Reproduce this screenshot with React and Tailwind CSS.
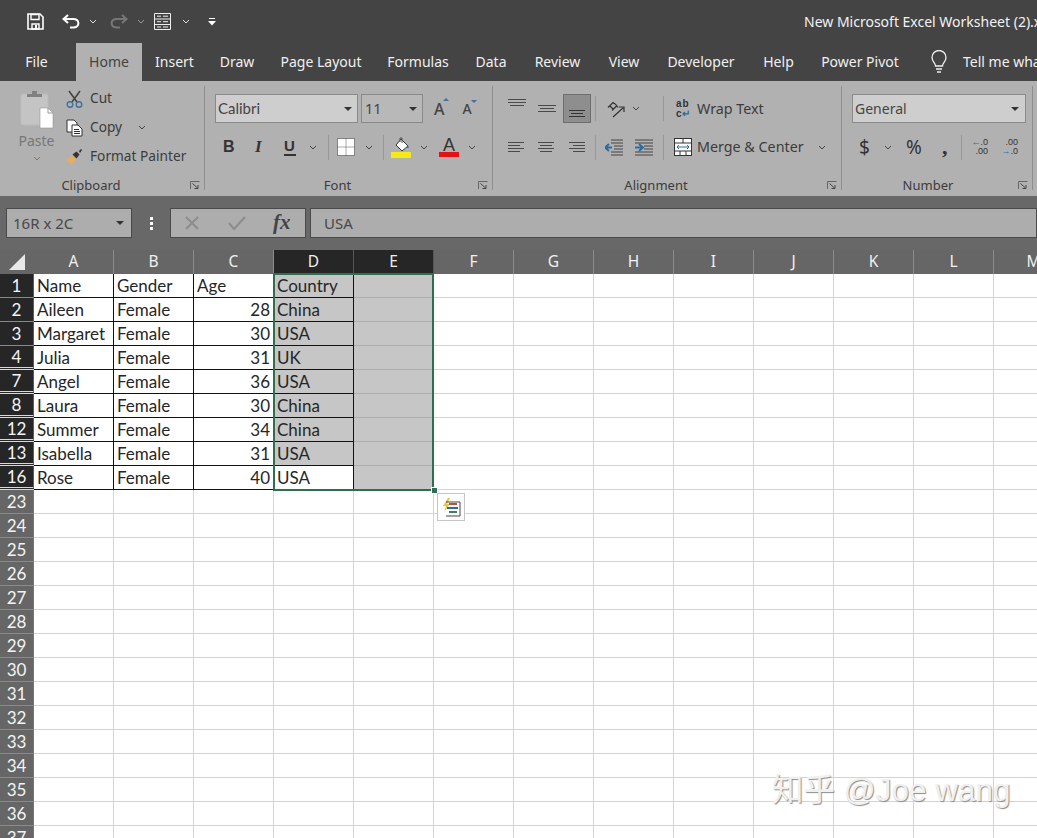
import React from 'react';

const tabs = [
  { label: 'File', width: 'w-[73px]' },
  { label: 'Home', width: 'w-[66px] ml-[3px] bg-[#b1b1b1] !text-[#444]' },
  { label: 'Insert', width: 'w-[65px]' },
  { label: 'Draw', width: 'w-[60px]' },
  { label: 'Page Layout', width: 'w-[108px]' },
  { label: 'Formulas', width: 'w-[86px]' },
  { label: 'Data', width: 'w-[60px]' },
  { label: 'Review', width: 'w-[73px]' },
  { label: 'View', width: 'w-[60px]' },
  { label: 'Developer', width: 'w-[94px]' },
  { label: 'Help', width: 'w-[61px]' },
  { label: 'Power Pivot', width: 'w-[102px]' },
];

const columns = ['A', 'B', 'C', 'D', 'E', 'F', 'G', 'H', 'I', 'J', 'K', 'L', 'M'];

const tableRows = [
  { n: 1, cells: ['Name', 'Gender', 'Age', 'Country'] },
  { n: 2, cells: ['Aileen', 'Female', '28', 'China'] },
  { n: 3, cells: ['Margaret', 'Female', '30', 'USA'] },
  { n: 4, cells: ['Julia', 'Female', '31', 'UK'], hidden: true },
  { n: 7, cells: ['Angel', 'Female', '36', 'USA'], hidden: true },
  { n: 8, cells: ['Laura', 'Female', '30', 'China'], hidden: true },
  { n: 12, cells: ['Summer', 'Female', '34', 'China'], hidden: true },
  { n: 13, cells: ['Isabella', 'Female', '31', 'USA'], hidden: true },
  { n: 16, cells: ['Rose', 'Female', '40', 'USA'], hidden: true },
];

const emptyRows = [23, 24, 25, 26, 27, 28, 29, 30, 31, 32, 33, 34, 35, 36, 37];

// Small ribbon chevron
const Chev = ({ className = '', color = '#444' }) => (
  <svg width="8" height="5" viewBox="0 0 8 5" className={`shrink-0 ${className}`}>
    <path d="M1 1l3 3 3-3" fill="none" stroke={color} strokeWidth="1" />
  </svg>
);

const Caret = ({ className = '', color = '#333' }) => (
  <svg width="8" height="4" viewBox="0 0 8 4" className={`shrink-0 ${className}`}>
    <path d="M0 0h8L4 4z" fill={color} />
  </svg>
);

const Launcher = ({ className = '' }) => (
  <svg width="10" height="9" viewBox="0 0 10 9" className={className}>
    <path d="M.5 8V.5H9.5" fill="none" stroke="#666" />
    <path d="M2.5 2.5l5 4.5M8 4v3.5H4.5" fill="none" stroke="#444" />
  </svg>
);

// lines for the alignment icons, [x, y, length] per line
const Lines = ({ rows, w = 18, h = 14, color = '#4a4a4a' }) => (
  <svg width={w} height={h} viewBox={`0 0 ${w} ${h}`} className="shrink-0">
    {rows.map(([x, y, len], i) => (
      <rect key={i} x={x} y={y} width={len} height="1" fill={color} />
    ))}
  </svg>
);

const Sep = ({ className = '' }) => <div className={`w-px bg-[#979797] shrink-0 ${className}`} />;

const Group = ({ label, width, labelPad, children }) => (
  <div className={`relative mt-[5px] h-[104px] shrink-0 border-r border-[#8f8f8f] ${width}`}>
    <div className="h-[86px]">{children}</div>
    <div className={`relative flex h-[27px] items-center justify-center text-[13px] text-[#3c3c3c] ${labelPad}`}>
      {label}
      <Launcher className="absolute right-[4px] top-[9px]" />
    </div>
  </div>
);

const QuickToolbar = () => (
  <div className="flex h-[43px] items-center">
    <svg width="17" height="17" viewBox="0 0 17 17" className="ml-[27px]">
      <path d="M1 1h12l3 3v12H1z" fill="none" stroke="#fff" strokeWidth="1.6" />
      <path d="M4 1.5h8v5H4zM5 11h7v5H5z" fill="none" stroke="#fff" strokeWidth="1.4" />
      <rect x="8" y="12" width="2" height="4" fill="#fff" />
    </svg>
    <svg width="18" height="15" viewBox="0 0 18 15" className="ml-[18px]">
      <path d="M6 1L1.5 5 6 9" fill="none" stroke="#fff" strokeWidth="2" />
      <path d="M2 5h9c7 0 7 8 1 8.5H8" fill="none" stroke="#fff" strokeWidth="2" />
    </svg>
    <Chev className="ml-[9px]" color="#ddd" />
    <svg width="18" height="15" viewBox="0 0 18 15" className="ml-[13px]">
      <path d="M12 1l4.5 4L12 9" fill="none" stroke="#777" strokeWidth="2" />
      <path d="M16 5H7c-7 0-7 8-1 8.5h4" fill="none" stroke="#777" strokeWidth="2" />
    </svg>
    <Chev className="ml-[9px]" color="#999" />
    <svg width="17" height="17" viewBox="0 0 17 17" className="ml-[9px]">
      <path d="M.5.5h16v16H.5zM.5 6h16M.5 11.5h16M3 3.2h4M9 3.2h5M3 8.7h4M9 8.7h5M3 14h4M9 14h5" fill="none" stroke="#eee" />
    </svg>
    <Chev className="ml-[11px]" color="#ddd" />
    <svg width="8" height="9" viewBox="0 0 8 9" className="ml-[18px]">
      <path d="M1 1.5h6" stroke="#fff" />
      <path d="M0 4h8L4 8.5z" fill="#fff" />
    </svg>
    <div className="ml-auto w-[233px] overflow-hidden whitespace-nowrap text-[14px] text-[#f2f2f2]">
      New Microsoft Excel Worksheet (2).xlsx - Excel
    </div>
  </div>
);

const TabRow = () => (
  <div className="flex h-[38px] items-stretch text-[14px] text-[#f0f0f0]">
    {tabs.map((t) => (
      <div key={t.label} className={`flex shrink-0 items-center justify-center pb-[2px] ${t.width}`}>
        {t.label}
      </div>
    ))}
    <svg width="18" height="24" viewBox="0 0 18 24" className="ml-[19px] self-center shrink-0">
      <path d="M5.5 16c0-3-3.500-4.500-3.500-8.500a7 7 0 0114 0c0 4-3.500 5.500-3.500 8.500z" fill="none" stroke="#f0f0f0" strokeWidth="1.300" />
      <path d="M6 19h6M7 22h4" stroke="#f0f0f0" strokeWidth="1.500" />
    </svg>
    <div className="ml-[15px] flex items-center whitespace-nowrap pb-[2px]">Tell me what you want to do</div>
  </div>
);

const ClipboardGroup = () => (
  <div className="flex">
    <div className="ml-[18px] flex w-[37px] flex-col items-center pt-[4px]">
      <svg width="34" height="39" viewBox="0 0 34 39">
        <rect x="1" y="4" width="27" height="31" rx="2" fill="#c4c4c4" stroke="#bbb" />
        <path d="M7 7V4h5V1h5v3h5v3z" fill="#808080" />
        <path d="M20 18h8l5 5v15H20z" fill="#fff" stroke="#999" strokeWidth=".6" />
        <path d="M28 18v5h5" fill="none" stroke="#999" />
      </svg>
      <div className="mt-[2px] text-[14px] leading-[20px] text-[#777]">Paste</div>
      <Chev className="mt-[5px]" color="#777" />
    </div>
    <div className="ml-[11px] -mt-[2px] flex flex-col text-[13.700px] text-[#3c3c3c]">
      <div className="flex h-[29px] items-center gap-[7px]">
        <svg width="17" height="18" viewBox="0 0 17 18" className="shrink-0">
          <path d="M3 1l8 11M14 1L6 12" stroke="#444" strokeWidth="1.600" />
          <circle cx="4" cy="14.500" r="2.800" fill="none" stroke="#41719c" strokeWidth="1.400" />
          <circle cx="13" cy="14.500" r="2.800" fill="none" stroke="#41719c" strokeWidth="1.400" />
        </svg>
        Cut
      </div>
      <div className="flex h-[29px] items-center gap-[7px]">
        <svg width="17" height="18" viewBox="0 0 17 18" className="shrink-0">
          <path d="M1 1h7l3 3v9H1z" fill="#fff" stroke="#333" />
          <path d="M6 6h6l4 4v7H6z" fill="#fff" stroke="#333" />
          <path d="M8 10.500h5M8 12.500h6M8 14.500h6" stroke="#333" />
        </svg>
        Copy
        <Chev className="ml-[9px]" />
      </div>
      <div className="flex h-[29px] items-center gap-[7px]">
        <svg width="17" height="18" viewBox="0 0 17 18" className="shrink-0">
          <path d="M1 12l5-5 4 4-4 5c-2 0-4-2-5-4z" fill="#e8ad5f" />
          <path d="M6.500 6.500l4-3 3 3-3 4z" fill="#333" />
          <path d="M13 3l2-2 1 1-2 3z" fill="#333" />
        </svg>
        Format Painter
      </div>
    </div>
  </div>
);

const FontGroup = () => (
  <div className="pt-[8px] pl-[10px]">
    <div className="flex h-[29px] items-center">
      <div className="flex h-[29px] w-[143px] items-center justify-between border border-[#8a8a8a] bg-[#cecece] pl-[2px] pr-[5px] font-['Lato',sans-serif] text-[15px] text-[#444]">
        Calibri
        <Caret />
      </div>
      <div className="ml-[3px] flex h-[29px] w-[62px] items-center justify-between border border-[#8a8a8a] bg-[#b8b8b8] pl-[3px] pr-[5px] text-[14.500px] text-[#444]">
        11
        <Caret />
      </div>
      <div className="relative ml-[11px] text-[16px] font-medium text-[#444]">
        A
        <span className="absolute -right-[5px] top-[1px] h-0 w-0 border-x-[3px] border-b-[3px] border-x-transparent border-b-[#41719c]" />
      </div>
      <div className="relative ml-[18px] text-[14px] font-medium text-[#444]">
        A
        <span className="absolute -right-[5px] top-[2px] h-0 w-0 border-x-[3px] border-t-[3px] border-x-transparent border-t-[#41719c]" />
      </div>
    </div>
    <div className="mt-[10px] flex h-[28px] items-center text-[#333]">
      <span className="ml-[8px] w-[10px] font-['Liberation_Sans',sans-serif] text-[16px] font-bold">B</span>
      <span className="ml-[22px] w-[9px] font-['Liberation_Serif',serif] text-[17px] font-bold italic">I</span>
      <span className="ml-[20px] w-[12px] border-b-2 border-[#333] font-['Liberation_Sans',sans-serif] text-[15px] leading-[16px] font-bold">U</span>
      <Chev className="ml-[13px]" />
      <Sep className="ml-[11px] h-[25px]" />
      <svg width="18" height="18" viewBox="0 0 18 18" className="ml-[8px] shrink-0">
        <rect x=".5" y=".5" width="17" height="17" fill="#fff" stroke="#333" strokeDasharray="1 1" />
        <path d="M9 .5v17M.5 9h17" stroke="#555" strokeDasharray="1 1" />
      </svg>
      <Chev className="ml-[10px]" />
      <Sep className="ml-[10px] h-[25px]" />
      <svg width="20" height="21" viewBox="0 0 20 21" className="ml-[7px] shrink-0">
        <path d="M10 2l7 7-6 5-6-6z" fill="#fff" stroke="#333" />
        <path d="M9 5V1h2v5" fill="none" stroke="#555" />
        <path d="M17 8l1 3h-2z" fill="#41719c" />
        <rect y="15" width="20" height="6" fill="#f5ea14" />
      </svg>
      <Chev className="ml-[9px]" />
      <div className="relative ml-[11px] flex h-[21px] w-[20px] flex-col items-center">
        <span className="h-[15px] font-['Liberation_Sans',sans-serif] text-[18px] leading-[16px] text-[#333]">A</span>
        <span className="h-[5px] w-[20px] bg-[#e50f14]" />
      </div>
      <Chev className="ml-[9px]" />
    </div>
  </div>
);

const AlignmentGroup = () => (
  <div className="flex pt-[8px]">
    <div className="ml-[15px] flex w-[87px] flex-wrap content-start">
      <div className="flex h-[29px] w-[30px] items-start pt-[5px]">
        <Lines rows={[[0, 0, 18], [0, 3, 18], [2, 6, 14]]} />
      </div>
      <div className="flex h-[29px] w-[25px] items-center">
        <Lines rows={[[0, 3, 18], [2, 6, 14], [0, 9, 18]]} />
      </div>
      <div className="flex h-[29px] w-[28px] items-end justify-center border border-[#6e6e6e] bg-[#8e8e8e] pb-[3px]">
        <Lines rows={[[1, 5, 16], [3, 8, 12], [1, 11, 16]]} color="#333" />
      </div>
      <div className="mt-[10px] flex h-[28px] w-[30px] items-center">
        <Lines rows={[[0, 2, 16], [0, 5, 12], [0, 8, 16], [0, 11, 12]]} />
      </div>
      <div className="mt-[10px] flex h-[28px] w-[31px] items-center">
        <Lines rows={[[0, 2, 16], [2, 5, 12], [0, 8, 16], [2, 11, 12]]} />
      </div>
      <div className="mt-[10px] flex h-[28px] w-[20px] items-center">
        <Lines rows={[[0, 2, 16], [4, 5, 12], [0, 8, 16], [4, 11, 12]]} />
      </div>
    </div>
    <div className="flex w-[68px] flex-col">
      <div className="flex h-[29px] items-center">
        <Sep className="h-[25px]" />
        <svg width="20" height="20" viewBox="0 0 20 20" className="ml-[9px] shrink-0">
          <path d="M3 8.500l5-5 1 1M5 7l3 3M8 3.500c2 1 4 3 5 5M7 11.500l5-5" fill="none" stroke="#333" strokeWidth="1.200" />
          <path d="M8 18L18 9M14 8h5v5" fill="none" stroke="#333" strokeWidth="1.200" />
        </svg>
        <Chev className="ml-[7px]" />
      </div>
      <div className="mt-[10px] flex h-[28px] items-center">
        <Sep className="h-[25px]" />
        <svg width="18" height="17" viewBox="0 0 18 17" className="ml-[9px] shrink-0">
          <path d="M6 1h12M6 4h12M9 7h9M9 10h9M6 13h12M6 16h12" stroke="#444" />
          <path d="M0 8.500h7M4 5L0 8.500 4 12" fill="none" stroke="#2d6ca2" strokeWidth="2" />
        </svg>
        <svg width="18" height="17" viewBox="0 0 18 17" className="ml-[12px] shrink-0">
          <path d="M0 1h18M0 4h18M9 7h9M9 10h9M0 13h18M0 16h18" stroke="#444" />
          <path d="M0 8.500h7M4 5l4 3.500L4 12" fill="none" stroke="#2d6ca2" strokeWidth="2" />
        </svg>
      </div>
    </div>
    <div className="flex flex-col text-[14.300px] text-[#3c3c3c]">
      <div className="flex h-[29px] items-center">
        <Sep className="mr-[12px] h-[25px]" />
        <div className="flex w-[17px] flex-col font-['Liberation_Sans',sans-serif] text-[10px] leading-[10px] font-bold text-[#333]">
          <span className="tracking-[1px]">ab</span>
          <span>c<span className="text-[#2d6ca2]">↵</span></span>
        </div>
        <span className="ml-[4px]">Wrap Text</span>
      </div>
      <div className="mt-[10px] flex h-[28px] items-center">
        <Sep className="mr-[10px] h-[25px]" />
        <svg width="18" height="18" viewBox="0 0 18 18" className="shrink-0">
          <rect x=".5" y=".5" width="17" height="17" fill="#fff" stroke="#333" />
          <path d="M.5 5h17M.5 13h17M9 .5V5M6 13v5M12 13v5" stroke="#333" />
          <path d="M3 9h12M5 7L3 9l2 2M13 7l2 2-2 2" fill="none" stroke="#2d6ca2" />
        </svg>
        <span className="ml-[5px]">Merge &amp; Center</span>
        <Chev className="ml-[14px]" />
      </div>
    </div>
  </div>
);

const NumberGroup = () => (
  <div className="pt-[8px] pl-[10px]">
    <div className="flex h-[29px] w-[174px] items-center justify-between border border-[#8a8a8a] bg-[#cecece] pl-[2px] pr-[6px] text-[14px] text-[#444]">
      General
      <Caret />
    </div>
    <div className="mt-[10px] flex h-[28px] items-center text-[#333]">
      <span className="ml-[7px] w-[11px] text-[19px] leading-none">$</span>
      <Chev className="ml-[14px]" />
      <span className="ml-[14px] w-[18px] text-[19px] leading-none">%</span>
      <span className="ml-[18px] w-[6px] font-['Liberation_Serif',serif] text-[22px] leading-[10px] font-bold">,</span>
      <Sep className="ml-[13px] h-[25px]" />
      <div className="ml-[9px] flex w-[17px] flex-col items-end font-['Liberation_Sans',sans-serif] text-[9px] leading-[9px]">
        <span><span className="font-bold text-[#2d6ca2]">←</span>.0</span>
        <span>.00</span>
      </div>
      <div className="ml-[13px] flex w-[17px] flex-col items-end font-['Liberation_Sans',sans-serif] text-[9px] leading-[9px]">
        <span>.00</span>
        <span><span className="font-bold text-[#2d6ca2]">→</span>.0</span>
      </div>
    </div>
  </div>
);

const FormulaBar = () => (
  <div className="flex h-[54px] items-start bg-[#686868] pt-[12px] text-[15px] text-[#484848]">
    <div className="ml-[6px] flex h-[30px] w-[126px] items-center justify-between border border-[#4a4a4a] bg-[#adadad] pl-[6px] pr-[7px]">
      16R x 2C
      <Caret color="#333" />
    </div>
    <div className="ml-[17px] flex h-[30px] w-[5px] flex-col items-center justify-center gap-[2px]">
      <span className="h-[3px] w-[3px] bg-white" />
      <span className="h-[3px] w-[3px] bg-white" />
      <span className="h-[3px] w-[3px] bg-white" />
    </div>
    <div className="ml-[16px] flex h-[30px] w-[136px] items-center border border-[#4a4a4a] bg-[#adadad]">
      <svg width="16" height="16" viewBox="0 0 16 16" className="ml-[13px]">
        <path d="M2 2l12 12M14 2L2 14" stroke="#8c8c8c" strokeWidth="1.800" />
      </svg>
      <svg width="18" height="16" viewBox="0 0 18 16" className="ml-[28px]">
        <path d="M1 8l5 6L17 2" fill="none" stroke="#8c8c8c" strokeWidth="2" />
      </svg>
      <span className="ml-[27px] font-['Liberation_Serif',serif] text-[21px] font-bold italic text-[#444]">fx</span>
    </div>
    <div className="ml-[4px] flex h-[30px] flex-1 items-center border border-[#4a4a4a] bg-[#adadad] pl-[13px]">USA</div>
  </div>
);

const RowHeader = ({ n, dark, hidden }) => (
  <div
    className={`box-border flex h-[24px] w-[34px] shrink-0 items-center justify-center border-r text-[17px] text-[#f4f4f4] ${
      dark ? 'bg-[#262626] border-[#3c6e55]' : 'bg-[#666666] border-[#777]'
    } ${hidden ? 'border-b-[3px] border-double border-b-[#d8d8d8]' : 'border-b border-b-[#8a8a8a]'}`}
  >
    {n}
  </div>
);

const Sheet = () => (
  <div className="relative font-['Lato',sans-serif] text-[17px] text-[#262626]">
    {/* column headers */}
    <div className="flex h-[24px] bg-[#666666] font-['Noto_Sans',sans-serif]">
      <div className="flex h-[24px] w-[34px] shrink-0 items-center justify-center">
        <div className="mt-[-1px] ml-[-1px] h-0 w-0 border-b-[16px] border-l-[16px] border-b-[#e8e8e8] border-l-transparent" />
      </div>
      {columns.map((c) => (
        <div
          key={c}
          className={`flex h-[24px] w-[80px] shrink-0 items-center justify-center border-r text-[15.500px] text-[#f0f0f0] ${
            c === 'D' || c === 'E' ? 'bg-[#262626] border-[#555]' : 'border-[#8c8c8c]'
          }`}
        >
          {c}
        </div>
      ))}
    </div>

    {/* rows that hold data */}
    {tableRows.map((row, i) => (
      <div key={row.n} className="flex h-[24px]">
        <RowHeader n={row.n} dark hidden={row.hidden} />
        {columns.map((c, j) => {
          const val = row.cells[j];
          if (j < 4) {
            const grey = c === 'D' && i < 8;
            return (
              <div
                key={c}
                className={`flex h-[24px] w-[80px] shrink-0 items-center border-r border-b border-[#111] px-[3px] pt-[1px] ${
                  grey ? 'bg-[#c6c6c6]' : 'bg-white'
                } ${c === 'C' && i > 0 ? 'justify-end' : ''}`}
              >
                {val}
              </div>
            );
          }
          if (c === 'E') {
            return <div key={c} className="h-[24px] w-[80px] shrink-0 border-b border-[#aeaeae] bg-[#c6c6c6]" />;
          }
          return <div key={c} className="h-[24px] w-[80px] shrink-0 border-r border-b border-[#d4d4d4] bg-white" />;
        })}
      </div>
    ))}

    {/* empty rows */}
    {emptyRows.map((n) => (
      <div key={n} className="flex h-[24px]">
        <RowHeader n={n} />
        {columns.map((c) => (
          <div key={c} className="h-[24px] w-[80px] shrink-0 border-r border-b border-[#d4d4d4] bg-white" />
        ))}
      </div>
    ))}

    {/* selection box */}
    <div className="absolute left-[273px] top-[23px] h-[218px] w-[161px] border-2 border-[#2f6f50]" />
    <div className="absolute left-[431px] top-[237px] h-[5px] w-[5px] border border-white bg-[#2f6f50] box-content" />

    {/* quick analysis button */}
    <div className="absolute left-[437px] top-[243px] flex h-[28px] w-[28px] items-center justify-center border border-[#c6c6c6] bg-white">
      <svg width="20" height="20" viewBox="0 0 20 20">
        <path d="M7 1L2 9h3l-2 6 6-8H6l3-6z" fill="#e8c34a" />
        <path d="M5 5h14v14H5" fill="none" stroke="#444" />
        <rect x="8" y="6" width="8" height="2" fill="#b5533c" />
        <rect x="6" y="10" width="11" height="2" fill="#2d6ca2" />
        <rect x="8" y="14" width="8" height="2" fill="#3f7a6a" />
      </svg>
    </div>

    {/* watermark */}
    <div className="absolute left-[772px] top-[522px] whitespace-nowrap font-['Liberation_Sans','Noto_Sans_CJK_SC',sans-serif] text-[31.500px] leading-[36px] text-[#f0f0f0] [text-shadow:1px_1px_1px_#8c8c8c]">
      知乎 @Joe wang
    </div>
  </div>
);

export default function App() {
  return (
    <div className="h-[838px] w-[1037px] overflow-hidden bg-white font-['Noto_Sans',sans-serif]">
      <div className="bg-[#444444]">
        <QuickToolbar />
        <TabRow />
      </div>
      <div className="flex h-[115px] items-start bg-[#b1b1b1]">
        <Group label="Clipboard" width="w-[205px]" labelPad="pr-[22px]">
          <ClipboardGroup />
        </Group>
        <Group label="Font" width="w-[288px]" labelPad="pr-[22px]">
          <FontGroup />
        </Group>
        <Group label="Alignment" width="w-[349px]" labelPad="pr-[22px]">
          <AlignmentGroup />
        </Group>
        <Group label="Number" width="w-[191px]" labelPad="pr-[18px]">
          <NumberGroup />
        </Group>
      </div>
      <FormulaBar />
      <Sheet />
    </div>
  );
}
